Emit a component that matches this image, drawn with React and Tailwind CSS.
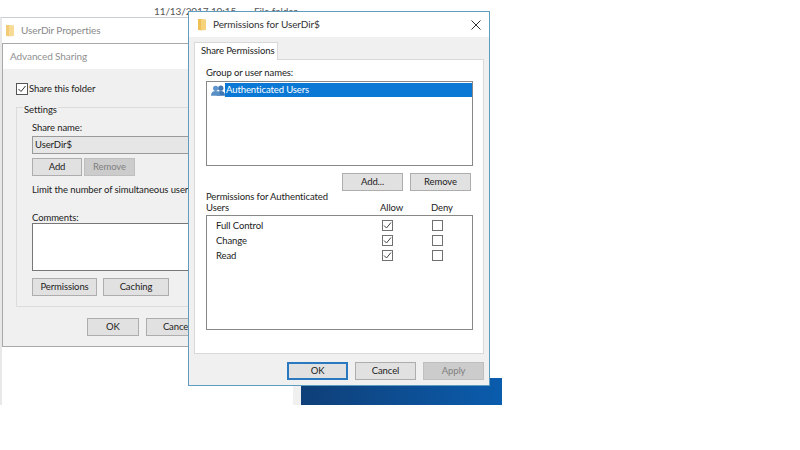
const font = { fontFamily: 'Lato, "Noto Sans", sans-serif', letterSpacing: "-0.1px" };

function Btn({ children, className = "", disabled, primary }) {
  return (
    <div
      className={
        "flex items-center justify-center text-[9.500px] border whitespace-nowrap " +
        (primary
          ? "border-2 border-[#2a78c0] bg-[#e1e1e1] text-[#222] "
          : disabled
          ? "border-[#bfbfbf] bg-[#cccccc] text-[#808080] "
          : "border-[#adadad] bg-[#e1e1e1] text-[#222] ") +
        className
      }
    >
      {children}
    </div>
  );
}

function Folder({ className = "" }) {
  return (
    <svg viewBox="0 0 10 13" className={"w-[10px] h-[13px] " + className}>
      <path d="M1 1h5l3 0.5V12l-6 0.5L1 11z" fill="#f6d27a" />
      <path d="M1 1h3v11H1z" fill="#eebf55" />
    </svg>
  );
}

function Users() {
  return (
    <svg viewBox="0 0 15 11" className="w-[14px] h-[11px] shrink-0">
      <circle cx="10.500" cy="3" r="2.800" fill="#3f78b4" />
      <path d="M6 11c0-3.500 2-5 4.500-5S15 7.500 15 11z" fill="#3f78b4" />
      <circle cx="5" cy="3.200" r="2.800" fill="#5f94cc" />
      <path d="M0 11c0-3.500 2-5 5-5s5 1.500 5 5z" fill="#5a8fc6" />
    </svg>
  );
}

function Check({ checked }) {
  return (
    <div className="w-[11px] h-[11px] border border-[#707070] bg-white flex items-center justify-center">
      {checked && (
        <svg viewBox="0 0 9 9" className="w-[9px] h-[9px]">
          <path d="M1 4.500L3.500 7L8 1.500" fill="none" stroke="#444" strokeWidth="1" />
        </svg>
      )}
    </div>
  );
}

function PermRow({ name }) {
  return (
    <div className="flex items-center h-[15px]">
      <span className="w-[175px] pl-[9px] pt-[2px] text-[9.500px] text-[#222]">{name}</span>
      <Check checked />
      <div className="w-[39px]" />
      <Check />
    </div>
  );
}

function BackWindow() {
  return (
    <div className="absolute left-0 top-[17px] w-[200px] h-[388px] bg-white border-t border-l-2 border-t-[#c8d0d4] border-l-[#e8e8e8]">
      <div className="flex items-center h-[25px] pl-[3px] gap-[6px] text-[10px] text-[#8a8a8a]">
        <Folder className="opacity-80" />
        <span>UserDir Properties</span>
      </div>
      <div className="w-[198px] h-[304px] border-l border-t border-b border-[#a8a8a8] bg-[#f0f0f0]">
        <div className="h-[25px] bg-white flex items-center pl-[7px] text-[10px] text-[#909090]">Advanced Sharing</div>
        <div className="pl-[13px] pt-[12px] text-[#222]">
          <div className="flex items-center gap-[1px] text-[9.500px]">
            <div className="w-[12px] h-[12px] border border-[#555] bg-white flex items-center justify-center">
              <svg viewBox="0 0 10 10" className="w-[10px] h-[10px]"><path d="M1.500 5L4 7.500L8.500 2" fill="none" stroke="#333" strokeWidth="1" /></svg>
            </div>
            <span className="pt-px">Share this folder</span>
          </div>
          <div className="mt-[11px] relative h-[200px] border border-r-0 border-[#dcdcdc] pl-[15px] pt-[13px]">
            <span className="absolute left-[6px] -top-[5px] bg-[#f0f0f0] px-[1px] text-[9.500px] leading-[13px]">Settings</span>
            <div className="text-[9.500px] leading-[13px]">Share name:</div>
            <div className="mt-[2px] h-[18px] border border-[#9a9a9a] bg-[#e6e6e6] text-[9.500px] flex items-center pl-[2px]">UserDir$</div>
            <div className="mt-[4px] flex gap-[2px]">
              <Btn className="w-[50px] h-[18px]">Add</Btn>
              <Btn disabled className="w-[51px] h-[18px]">Remove</Btn>
            </div>
            <div className="mt-[7px] text-[9.500px] leading-[13px] whitespace-nowrap">Limit the number of simultaneous users</div>
            <div className="mt-[16px] text-[9.500px] leading-[12px] -mb-px">Comments:</div>
            <div className="h-[48px] border border-[#777] bg-white" />
            <div className="mt-[7px] flex gap-[6px]">
              <Btn className="w-[65px] h-[18px]">Permissions</Btn>
              <Btn className="w-[66px] h-[18px]">Caching</Btn>
            </div>
          </div>
          <div className="mt-[11px] ml-[71px] flex gap-[7px]">
            <Btn className="w-[60px] h-[18px]">OK</Btn>
            <Btn className="w-[60px] h-[18px] justify-start pl-[16px]">Cancel</Btn>
          </div>
        </div>
      </div>
    </div>
  );
}

function FrontWindow() {
  return (
    <div className="absolute left-[188px] top-[11px] w-[302px] h-[375px] border border-[#5e9dc0] bg-[#f0f0f0] flex flex-col">
      <div className="h-[25px] bg-white flex items-center pl-[8px] text-[10px] text-[#333] shrink-0">
        <Folder />
        <span className="ml-[6px]">Permissions for UserDir$</span>
        <svg viewBox="0 0 10 10" className="w-[10px] h-[10px] ml-auto mr-[8px]"><path d="M0.500 0.500L9.500 9.500M9.500 0.500L0.500 9.500" stroke="#333" strokeWidth="1" /></svg>
      </div>
      <div className="px-[5px] pt-[5px]">
        <div className="relative z-10 w-[84px] h-[18px] -mb-px bg-white border border-b-0 border-[#d9d9d9] flex items-center pl-[6px] text-[9.500px] text-[#222] whitespace-nowrap">Share Permissions</div>
        <div className="h-[295px] w-[290px] bg-white border border-[#d9d9d9] pl-[11px] pt-[6px] text-[#222]">
          <div className="text-[9.500px] leading-[13px]">Group or user names:</div>
          <div className="mt-[2px] w-[267px] h-[85px] border border-[#888] bg-white pt-[1px] pl-[4px]">
            <div className="flex items-center h-[14px]">
              <Users />
              <div className="flex-1 h-full bg-[#0a78d4] text-white text-[9.500px] flex items-center pl-px">Authenticated Users</div>
            </div>
          </div>
          <div className="mt-[7px] flex justify-end gap-[7px] w-[265px]">
            <Btn className="w-[61px] h-[18px]">Add...</Btn>
            <Btn className="w-[61px] h-[18px]">Remove</Btn>
          </div>
          <div className="flex items-end">
            <div className="w-[125px] text-[9.500px] leading-[11px]">Permissions for Authenticated Users</div>
            <div className="w-[49px]" />
            <div className="text-[9.500px] leading-[11px] w-[36px]">Allow</div>
            <div className="text-[9.500px] leading-[11px] ml-[15px]">Deny</div>
          </div>
          <div className="mt-[2px] w-[267px] h-[115px] border border-[#888] bg-white pt-[2px]">
            <PermRow name="Full Control" />
            <PermRow name="Change" />
            <PermRow name="Read" />
          </div>
        </div>
      </div>
      <div className="mt-[8px] flex justify-end gap-[7px] pr-[5px]">
        <Btn primary className="w-[61px] h-[18px]">OK</Btn>
        <Btn className="w-[61px] h-[18px]">Cancel</Btn>
        <Btn disabled className="w-[61px] h-[18px]">Apply</Btn>
      </div>
    </div>
  );
}

export default function App() {
  return (
    <div className="relative w-[800px] h-[450px] bg-white overflow-hidden" style={font}>
      <div className="absolute left-[154px] top-[5px] text-[10px] leading-[12px] text-[#555] whitespace-nowrap">11/13/2017 10:15</div>
      <div className="absolute left-[254px] top-[5px] text-[10px] leading-[12px] text-[#555] whitespace-nowrap">File folder</div>
      <BackWindow />
      <div className="absolute left-[293px] top-[378px] w-[8px] h-[27px] bg-[#f0f0f0]" />
      <div className="absolute left-[301px] top-[378px] w-[201px] h-[27px] bg-gradient-to-r from-[#0e3f78] to-[#0a5cad]" />
      <FrontWindow />
    </div>
  );
}
